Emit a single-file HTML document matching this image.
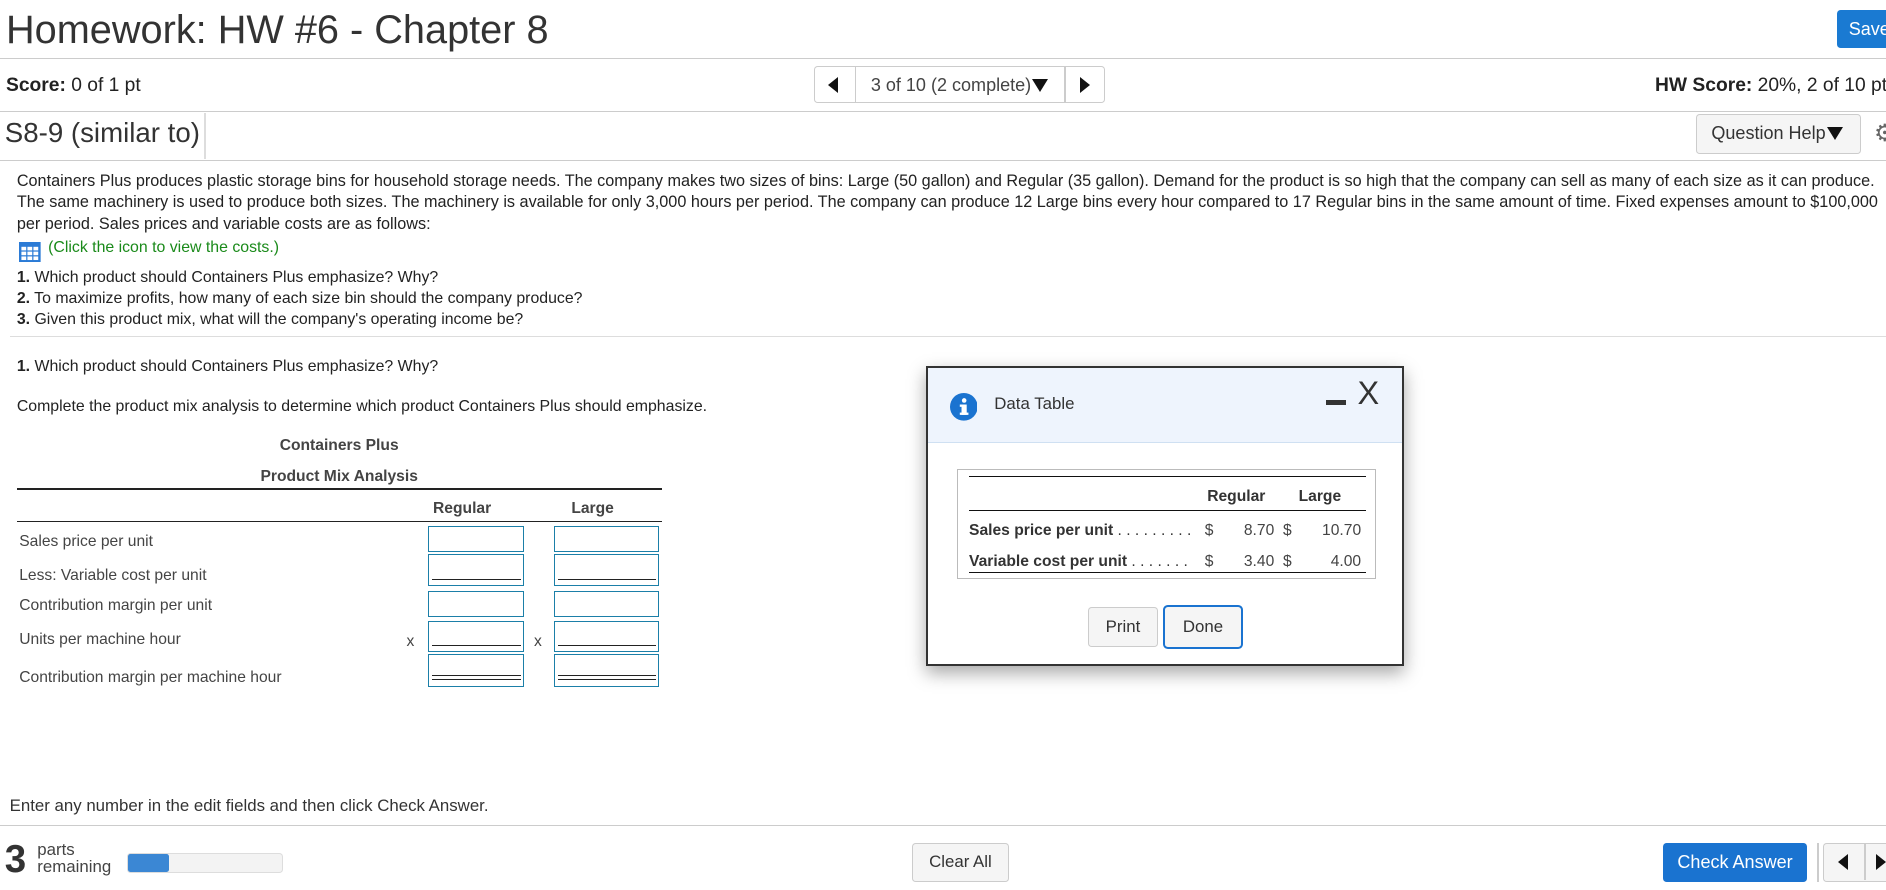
<!DOCTYPE html>
<html><head><meta charset="utf-8">
<style>
html,body{margin:0;padding:0;background:#fff;overflow:hidden}
body{width:1886px;height:890px}
#w{zoom:1.2028;position:relative;width:1568px;height:740px;font-family:"Liberation Sans",Arial,sans-serif;color:#333;font-size:13px}
.a{position:absolute;white-space:nowrap}
.hl{position:absolute;height:1px;background:#ccc}
.inp{position:absolute;border:1px solid #1b7fa8;background:#fff;box-sizing:border-box}
.btn{position:absolute;box-sizing:border-box;border:1px solid #ccc;background:#f5f5f5;border-radius:3px;text-align:center;font-size:14px;color:#333}
b{font-weight:bold}
</style></head><body><div id="w">
<div class="a" style="left:5px;top:7px;font-size:33px;color:#333">Homework: HW #6 - Chapter 8</div>
<div class="a" style="left:1527px;top:8px;width:50px;height:32px;background:#1a7ad2;border-radius:3px;color:#fff;font-size:15px;line-height:32px;padding-left:10px">Save</div>
<div class="hl" style="left:0;top:48px;width:1568px"></div>
<div class="a" style="left:5px;top:62px;font-size:16px;color:#222"><b>Score:</b> 0 of 1 pt</div>
<div class="a" style="left:677px;top:55px;width:242px;height:31px;border:1px solid #ccc;border-radius:3px;box-sizing:border-box"></div>
<div class="a" style="left:711px;top:56px;width:1px;height:30px;background:#ccc"></div>
<div class="a" style="left:885px;top:56px;width:1px;height:30px;background:#ccc"></div>
<div class="a" style="left:688px;top:64px;width:0;height:0;border-top:7px solid transparent;border-bottom:7px solid transparent;border-right:9px solid #111"></div>
<div class="a" style="left:898px;top:64px;width:0;height:0;border-top:7px solid transparent;border-bottom:7px solid transparent;border-left:9px solid #111"></div>
<div class="a" style="left:724px;top:62px;font-size:15px;color:#444">3 of 10 (2 complete)</div>
<div class="a" style="left:858px;top:66px;width:0;height:0;border-left:7px solid transparent;border-right:7px solid transparent;border-top:11px solid #111"></div>
<div class="a" style="left:1376px;top:62px;font-size:16px;color:#222"><b>HW Score:</b> 20%, 2 of 10 pts</div>
<div class="hl" style="left:0;top:92px;width:1568px"></div>
<div class="a" style="left:4px;top:97px;font-size:23px;color:#333">S8-9 (similar to)</div>
<div class="a" style="left:170px;top:94px;width:1px;height:38px;background:#ddd"></div>
<div class="btn" style="left:1410px;top:95px;width:137px;height:33px;line-height:31px;font-size:15px;text-align:left;padding-left:12px">Question Help</div>
<div class="a" style="left:1519px;top:106px;width:0;height:0;border-left:7px solid transparent;border-right:7px solid transparent;border-top:11px solid #111"></div>
<div class="a" style="left:1558px;top:99px;font-size:20px;color:#666">⚙</div>
<div class="hl" style="left:0;top:133px;width:1568px"></div>
<div class="a" style="left:14px;top:142px;line-height:18px;font-size:13.5px;color:#222">Containers Plus produces plastic storage bins for household storage needs. The company makes two sizes of bins: Large (50 gallon) and Regular (35 gallon). Demand for the product is so high that the company can sell as many of each size as it can produce.<br>The same machinery is used to produce both sizes. The machinery is available for only 3,000 hours per period. The company can produce 12 Large bins every hour compared to 17 Regular bins in the same amount of time. Fixed expenses amount to $100,000<br>per period. Sales prices and variable costs are as follows:</div>
<svg class="a" style="left:16px;top:201px" width="18" height="17" viewBox="0 0 18 17"><rect x="0" y="0" width="18" height="17" fill="#2b7bd6"/><g fill="#fff"><rect x="2" y="4" width="4" height="3"/><rect x="7" y="4" width="4" height="3"/><rect x="12" y="4" width="4" height="3"/><rect x="2" y="8" width="4" height="3"/><rect x="7" y="8" width="4" height="3"/><rect x="12" y="8" width="4" height="3"/><rect x="2" y="12" width="4" height="3"/><rect x="7" y="12" width="4" height="3"/><rect x="12" y="12" width="4" height="3"/></g></svg>
<div class="a" style="left:40px;top:199px;color:#1a8a1a;font-size:13.2px">(Click the icon to view the costs.)</div>
<div class="a" style="left:14px;top:222px;line-height:17.5px;font-size:13.2px;color:#222"><b>1.</b> Which product should Containers Plus emphasize? Why?<br><b>2.</b> To maximize profits, how many of each size bin should the company produce?<br><b>3.</b> Given this product mix, what will the company's operating income be?</div>
<div class="hl" style="left:8px;top:279px;width:1560px;background:#ddd"></div>
<div class="a" style="left:14px;top:298px;font-size:13.2px;color:#222"><b>1.</b> Which product should Containers Plus emphasize? Why?</div>
<div class="a" style="left:14px;top:331px;font-size:13.2px;color:#222">Complete the product mix analysis to determine which product Containers Plus should emphasize.</div>
<div class="a" style="left:14px;top:363px;width:536px;text-align:center;font-weight:bold;color:#444">Containers Plus</div>
<div class="a" style="left:14px;top:389px;width:536px;text-align:center;font-weight:bold;color:#444">Product Mix Analysis</div>
<div class="a" style="left:14px;top:406px;width:536px;height:1px;background:#222"></div>
<div class="a" style="left:360px;top:416px;font-weight:bold;color:#444">Regular</div>
<div class="a" style="left:475px;top:416px;font-weight:bold;color:#444">Large</div>
<div class="a" style="left:14px;top:433px;width:536px;height:1px;background:#222"></div>
<div class="a" style="left:16px;top:443px;color:#444">Sales price per unit</div>
<div class="a" style="left:16px;top:471px;color:#444">Less: Variable cost per unit</div>
<div class="a" style="left:16px;top:496px;color:#444">Contribution margin per unit</div>
<div class="a" style="left:16px;top:525px;color:#444">Units per machine hour</div>
<div class="a" style="left:16px;top:556px;color:#444">Contribution margin per machine hour</div>
<div class="a" style="left:338px;top:526px;color:#444">x</div>
<div class="a" style="left:444px;top:526px;color:#444">x</div>
<div class="inp" style="left:356px;top:437px;width:80px;height:22px"></div>
<div class="inp" style="left:461px;top:437px;width:87px;height:22px"></div>
<div class="inp" style="left:356px;top:461px;width:80px;height:26px"><div style="position:absolute;left:2px;right:2px;bottom:4px;height:1px;background:#222"></div></div>
<div class="inp" style="left:461px;top:461px;width:87px;height:26px"><div style="position:absolute;left:2px;right:2px;bottom:4px;height:1px;background:#222"></div></div>
<div class="inp" style="left:356px;top:491px;width:80px;height:22px"></div>
<div class="inp" style="left:461px;top:491px;width:87px;height:22px"></div>
<div class="inp" style="left:356px;top:516px;width:80px;height:26px"><div style="position:absolute;left:2px;right:2px;bottom:4px;height:1px;background:#222"></div></div>
<div class="inp" style="left:461px;top:516px;width:87px;height:26px"><div style="position:absolute;left:2px;right:2px;bottom:4px;height:1px;background:#222"></div></div>
<div class="inp" style="left:356px;top:544px;width:80px;height:27px"><div style="position:absolute;left:2px;right:2px;bottom:5px;height:4px;border-top:1.5px solid #222;border-bottom:1.5px solid #222;box-sizing:border-box"></div></div>
<div class="inp" style="left:461px;top:544px;width:87px;height:27px"><div style="position:absolute;left:2px;right:2px;bottom:5px;height:4px;border-top:1.5px solid #222;border-bottom:1.5px solid #222;box-sizing:border-box"></div></div>

<div class="a" style="left:770px;top:304px;width:397px;height:250px;border:2px solid #333;box-sizing:border-box;background:#fff;box-shadow:0 6px 14px rgba(0,0,0,.35)">
 <div style="position:absolute;left:0;top:0;right:0;height:62px;background:#eef4fd;border-bottom:1px solid #cfe0f2"></div>
 <svg style="position:absolute;left:18px;top:21px" width="23" height="23" viewBox="0 0 24 24"><circle cx="12" cy="12" r="12" fill="#1a73d0"/><rect x="10" y="10" width="4.5" height="9" fill="#fff"/><rect x="8.5" y="10" width="5" height="2" fill="#fff"/><rect x="8.5" y="17" width="7.5" height="2" fill="#fff"/><circle cx="12.3" cy="6.5" r="2" fill="#fff"/></svg>
 <div style="position:absolute;left:55px;top:22px;font-size:14px;color:#333">Data Table</div>
 <div style="position:absolute;left:331px;top:27px;width:16px;height:4px;background:#333"></div>
 <div style="position:absolute;left:357px;top:6px;font-size:27px;color:#333;font-weight:300">X</div>
 <div style="position:absolute;left:24px;top:84px;width:348px;height:92px;border:1px solid #bbb;box-sizing:border-box"></div>
 <div style="position:absolute;left:34px;top:90px;width:330px;height:1px;background:#111"></div>
 <div style="position:absolute;left:232px;top:100px;font-weight:bold;font-size:13px;color:#333">Regular</div>
 <div style="position:absolute;left:308px;top:100px;font-weight:bold;font-size:13px;color:#333">Large</div>
 <div style="position:absolute;left:34px;top:118px;width:330px;height:1px;background:#111"></div>
 <div style="position:absolute;left:34px;top:128px;font-weight:bold;font-size:13px;color:#333">Sales price per unit<span style="font-weight:normal"> . . . . . . . . . </span></div>
 <div style="position:absolute;left:34px;top:154px;font-weight:bold;font-size:13px;color:#333">Variable cost per unit<span style="font-weight:normal"> . . . . . . . </span></div>
 <div style="position:absolute;left:230px;top:128px;font-size:13px;color:#444">$&nbsp;&nbsp;&nbsp;&nbsp;&nbsp;&nbsp;&nbsp;8.70&nbsp; $&nbsp;&nbsp;&nbsp;&nbsp;&nbsp;&nbsp;&nbsp;10.70</div>
 <div style="position:absolute;left:230px;top:154px;font-size:13px;color:#444">$&nbsp;&nbsp;&nbsp;&nbsp;&nbsp;&nbsp;&nbsp;3.40&nbsp; $&nbsp;&nbsp;&nbsp;&nbsp;&nbsp;&nbsp;&nbsp;&nbsp;&nbsp;4.00</div>
 <div style="position:absolute;left:34px;top:170px;width:330px;height:1px;background:#111"></div>
 <div class="btn" style="left:133px;top:199px;width:58px;height:33px;line-height:31px">Print</div>
 <div class="btn" style="left:195px;top:197px;width:67px;height:37px;line-height:33px;border:2px solid #1a73d0;border-radius:4px">Done</div>
</div>

<div class="a" style="left:8px;top:662px;font-size:14px;color:#333">Enter any number in the edit fields and then click Check Answer.</div>
<div class="hl" style="left:0;top:686px;width:1568px"></div>
<div class="a" style="left:4px;top:697px;font-size:32px;font-weight:bold;color:#333">3</div>
<div class="a" style="left:31px;top:700px;font-size:14px;line-height:14px;color:#444">parts<br>remaining</div>
<div class="a" style="left:106px;top:709px;width:129px;height:17px;border:1px solid #ddd;border-radius:3px;background:#f3f3f3;box-sizing:border-box"><div style="width:34px;height:15px;background:#3b87d4;border-radius:2px"></div></div>
<div class="btn" style="left:758px;top:701px;width:81px;height:32px;line-height:30px">Clear All</div>
<div class="a" style="left:1383px;top:701px;width:119px;height:32px;background:#1a73d0;border-radius:3px;color:#fff;font-size:15px;line-height:32px;text-align:center">Check Answer</div>
<div class="a" style="left:1511px;top:701px;width:1px;height:32px;background:#ccc"></div>
<div class="btn" style="left:1516px;top:701px;width:60px;height:32px"></div>
<div class="a" style="left:1528px;top:710px;width:0;height:0;border-top:7px solid transparent;border-bottom:7px solid transparent;border-right:9px solid #111"></div>
<div class="a" style="left:1550px;top:702px;width:1px;height:30px;background:#ccc"></div>
<div class="a" style="left:1560px;top:710px;width:0;height:0;border-top:7px solid transparent;border-bottom:7px solid transparent;border-left:9px solid #111"></div>
</div></body></html>
